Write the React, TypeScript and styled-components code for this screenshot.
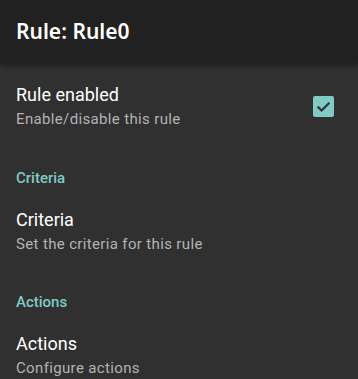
import styled, { createGlobalStyle } from "styled-components";

const GlobalStyle = createGlobalStyle`
  html, body {
    margin: 0;
    padding: 0;
    background-color: #303030;
  }
  body {
    font-family: Roboto, "Liberation Sans", sans-serif;
  }
`;

type Pref = {
  title: string;
  summary: string;
  checked?: boolean;
};

const sections: { header?: string; prefs: Pref[] }[] = [
  { prefs: [{ title: "Rule enabled", summary: "Enable/disable this rule", checked: true }] },
  { header: "Criteria", prefs: [{ title: "Criteria", summary: "Set the criteria for this rule" }] },
  { header: "Actions", prefs: [{ title: "Actions", summary: "Configure actions" }] },
];

export default function App() {
  return (
    <Screen>
      <GlobalStyle />
      <Toolbar>
        <ToolbarTitle>Rule: Rule0</ToolbarTitle>
      </Toolbar>
      <List>
        {sections.map((section, i) => (
          <Section key={i}>
            {section.header && <CategoryHeader>{section.header}</CategoryHeader>}
            {section.prefs.map((pref) => (
              <PrefRow key={pref.title}>
                <PrefText>
                  <PrefTitle>{pref.title}</PrefTitle>
                  <PrefSummary>{pref.summary}</PrefSummary>
                </PrefText>
                {pref.checked !== undefined && (
                  <CheckBox $checked={pref.checked}>
                    {pref.checked && (
                      <svg width="21" height="21" viewBox="0 0 21 21">
                        <polyline
                          points="4.6,10.6 8.6,14.5 16.4,6.7"
                          fill="none"
                          stroke="#2e3333"
                          strokeWidth="2.2"
                        />
                      </svg>
                    )}
                  </CheckBox>
                )}
              </PrefRow>
            ))}
          </Section>
        ))}
      </List>
    </Screen>
  );
}

const Screen = styled.div`
  width: 358px;
  height: 379px;
  overflow: hidden;
  background-color: #303030;
`;

const Toolbar = styled.div`
  position: relative;
  z-index: 1;
  display: flex;
  align-items: center;
  height: 63px;
  padding: 0 16px;
  background-color: #212121;
  box-shadow: 0 2px 6px rgba(0, 0, 0, 0.45);
`;

const ToolbarTitle = styled.span`
  font-family: "Noto Sans", "Open Sans", sans-serif;
  font-weight: 600;
  font-size: 21px;
  color: #ffffff;
  margin-top: -1px;
`;

const List = styled.div`
  display: flex;
  flex-direction: column;
`;

const Section = styled.div`
  display: flex;
  flex-direction: column;
`;

const CategoryHeader = styled.div`
  padding: 18.5px 16px 0;
  font-size: 15px;
  line-height: 20px;
  font-weight: 500;
  color: #80cbc4;
`;

const PrefRow = styled.div`
  display: flex;
  align-items: center;
  justify-content: space-between;
  padding: 20px 24px 20px 16px;
`;

const PrefText = styled.div`
  display: flex;
  flex-direction: column;
  gap: 2px;
`;

const PrefTitle = styled.span`
  font-size: 18px;
  line-height: 24px;
  color: #ffffff;
`;

const PrefSummary = styled.span`
  font-size: 15px;
  line-height: 20px;
  letter-spacing: 0.35px;
  color: #b3b3b3;
`;

const CheckBox = styled.div<{ $checked: boolean }>`
  width: 21px;
  height: 21px;
  border-radius: 2px;
  box-sizing: border-box;
  background-color: ${(p) => (p.$checked ? "#80cbc4" : "transparent")};
  border: ${(p) => (p.$checked ? "none" : "2px solid #b3b3b3")};
  display: flex;
  svg {
    display: block;
  }
`;
